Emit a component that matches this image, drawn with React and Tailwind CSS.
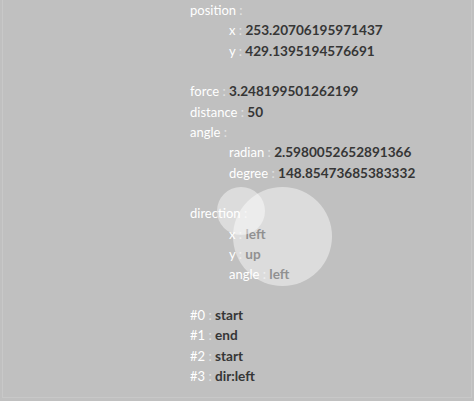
import React from 'react';

const Row = ({ label, value, indent }) => (
    <li className={`h-[20.33px] whitespace-nowrap ${indent ? 'pl-[39px]' : ''}`}>
        <span className="text-white">{label}</span>
        <span className="text-[#e2e2e2]"> : </span>
        {value !== undefined && <span className="text-[13.6px] font-bold text-[#363636]">{value}</span>}
    </li>
);

export default function App() {
    return (
        <div className="relative h-[401px] w-[474px] overflow-hidden bg-[#c0c0c0] px-[2px] pb-[3px]" style={{ fontFamily: 'Lato, "Open Sans", sans-serif' }}>
            <div className="h-full border-x border-b border-[#c8c8c8]">
                <ul className="pl-[187px] text-[13px] leading-[20.33px]">
                    <Row label="position" />
                    <Row indent label="x" value="253.20706195971437" />
                    <Row indent label="y" value="429.1395194576691" />
                    <li className="h-[20.33px]" />
                    <Row label="force" value="3.248199501262199" />
                    <Row label="distance" value="50" />
                    <Row label="angle" />
                    <Row indent label="radian" value="2.5980052652891366" />
                    <Row indent label="degree" value="148.85473685383332" />
                    <li className="h-[20.33px]" />
                    <Row label="direction" />
                    <Row indent label="x" value="left" />
                    <Row indent label="y" value="up" />
                    <Row indent label="angle" value="left" />
                    <li className="h-[20.33px]" />
                    <Row label="#0" value="start" />
                    <Row label="#1" value="end" />
                    <Row label="#2" value="start" />
                    <Row label="#3" value="dir:left" />
                </ul>
            </div>

            {/* joystick */}
            <div className="absolute left-[233px] top-[187px] h-[99px] w-[99px] rounded-full bg-white/45" />
            <div className="absolute left-[217px] top-[187px] h-[48px] w-[48px] rounded-full bg-white/45" />
        </div>
    );
}
